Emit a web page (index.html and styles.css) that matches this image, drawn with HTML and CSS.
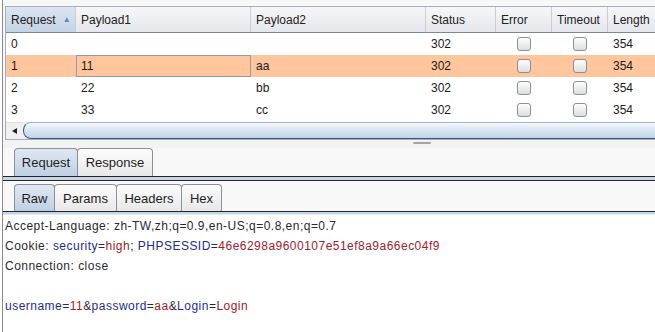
FILE: index.html
```html
<!DOCTYPE html>
<html lang="en">

<head>
    <meta charset="UTF-8">
    <title>Intruder attack results</title>
    <link rel="stylesheet" href="styles.css">
</head>

<body>
    <div class="app">
        <!--results table-->
        <div class="results">
            <div class="row head">
                <div class="cell sorted">Request <span class="sort">&#9650;</span></div>
                <div class="cell">Payload1</div>
                <div class="cell">Payload2</div>
                <div class="cell">Status</div>
                <div class="cell">Error</div>
                <div class="cell">Timeout</div>
                <div class="cell">Length</div>
            </div>
            <div class="row">
                <div class="cell">0</div>
                <div class="cell"></div>
                <div class="cell"></div>
                <div class="cell">302</div>
                <div class="cell check"><span class="box"></span></div>
                <div class="cell check"><span class="box"></span></div>
                <div class="cell">354</div>
            </div>
            <div class="row selected">
                <div class="cell">1</div>
                <div class="cell focus">11</div>
                <div class="cell">aa</div>
                <div class="cell">302</div>
                <div class="cell check"><span class="box"></span></div>
                <div class="cell check"><span class="box"></span></div>
                <div class="cell">354</div>
            </div>
            <div class="row">
                <div class="cell">2</div>
                <div class="cell">22</div>
                <div class="cell">bb</div>
                <div class="cell">302</div>
                <div class="cell check"><span class="box"></span></div>
                <div class="cell check"><span class="box"></span></div>
                <div class="cell">354</div>
            </div>
            <div class="row">
                <div class="cell">3</div>
                <div class="cell">33</div>
                <div class="cell">cc</div>
                <div class="cell">302</div>
                <div class="cell check"><span class="box"></span></div>
                <div class="cell check"><span class="box"></span></div>
                <div class="cell">354</div>
            </div>

            <!--horizontal scrollbar-->
            <div class="hscroll">
                <span class="arrow-btn"><span class="arrow"></span></span>
                <span class="thumb"></span>
            </div>
        </div>

        <!--splitter-->
        <div class="splitter"><span class="grip"></span></div>

        <!--request / response tabs-->
        <div class="tabs">
            <span class="tab active tab-req">Request</span>
            <span class="tab tab-resp">Response</span>
        </div>
        <div class="band"></div>

        <div class="tabs sub">
            <span class="tab active tab-raw">Raw</span>
            <span class="tab tab-params">Params</span>
            <span class="tab tab-headers">Headers</span>
            <span class="tab tab-hex">Hex</span>
        </div>
        <div class="band thin"></div>

        <!--raw request-->
        <div class="raw">
            <div class="line">Accept-Language: zh-TW,zh;q=0.9,en-US;q=0.8,en;q=0.7</div>
            <div class="line">Cookie: <span class="k">security</span>=<span class="v">high</span>; <span class="k">PHPSESSID</span>=<span class="v">46e6298a9600107e51ef8a9a66ec04f9</span></div>
            <div class="line">Connection: close</div>
            <div class="line"></div>
            <div class="line"><span class="k">username</span>=<span class="v">11</span>&amp;<span class="k">password</span>=<span class="v">aa</span>&amp;<span class="k">Login</span>=<span class="v">Login</span></div>
        </div>
    </div>
</body>

</html>
```

FILE: styles.css
```css
* {
    margin: 0;
    padding: 0;
    box-sizing: border-box;
}

body {
    width: 655px;
    height: 332px;
    overflow: hidden;
    background-color: #fff;
    font-family: "Liberation Sans", Arial, sans-serif;
    font-size: 12px;
    color: #1b1b1b;
}

.app {
    display: flex;
    flex-direction: column;
    margin-left: 2px;
    padding-top: 6px;
    height: 332px;
    border-left: 1px solid #8c8c8c;
    background-color: #f7f7f7;
}

/* results table */
.results {
    margin-left: 2px;
    border: 1px solid #a7aeb7;
    border-right: none;
    overflow: hidden;
    background-color: #fff;
}

.row {
    display: grid;
    grid-template-columns: 70px 175px 175px 70px 56px 56px 80px;
    height: 22px;
    width: 700px;
}

.cell {
    display: flex;
    align-items: center;
    padding-left: 5px;
    white-space: nowrap;
}

.row.head {
    height: 26px;
    border-bottom: 1px solid #7d8894;
    background: linear-gradient(#f6f7f9, #e4e7eb);
}

.row.head .cell {
    border-right: 1px solid #c9ced5;
    color: #222;
}

.row.head .cell.sorted {
    background: linear-gradient(#dbe5f0, #c3d3e4);
}

.sort {
    margin-left: 7px;
    font-size: 8px;
    color: #5f8bb8;
}

.row.selected {
    background-color: #ffc59c;
}

.cell.focus {
    border: 1px solid #8a9fb6;
    padding-left: 4px;
}

.cell.check {
    justify-content: center;
    padding-left: 0;
}

.box {
    width: 14px;
    height: 14px;
    border: 1px solid #8d8f92;
    border-radius: 3px;
    background: linear-gradient(#fdfdfd, #dcdedf);
}

/* scrollbar */
.hscroll {
    display: flex;
    height: 17px;
    margin-top: 1px;
    background-color: #f0f0f0;
}

.arrow-btn {
    display: flex;
    align-items: center;
    justify-content: center;
    width: 17px;
    border-top: 1px solid #dcdcdc;
}

.arrow {
    width: 0;
    height: 0;
    border-top: 3px solid transparent;
    border-bottom: 3px solid transparent;
    border-right: 5px solid #222;
}

.thumb {
    flex: 1;
    border: 1px solid #3a5878;
    border-top-color: #9bb3cb;
    border-right: none;
    border-radius: 8px 0 0 8px;
    background: linear-gradient(#f3f7fb, #dde8f3 40%, #c0d4e9);
}

/* splitter */
.splitter {
    height: 8px;
    padding-left: 410px;
    background-color: #f3f3f3;
}

.grip {
    display: block;
    width: 18px;
    height: 2px;
    margin-top: 2px;
    border-radius: 1px;
    background-color: #a4a4a4;
}

/* tabs */
.tabs {
    display: flex;
    flex-shrink: 0;
    height: 28px;
    padding-left: 11px;
    background-color: #f8f8f8;
}

.tabs.sub {
    height: 30px;
    padding-top: 3px;
}

.tab {
    display: flex;
    align-items: center;
    justify-content: center;
    border: 1px solid #8b8f96;
    border-bottom: none;
    border-radius: 4px 4px 0 0;
    background: linear-gradient(#fcfcfc, #e8e8e8);
    color: #1e1e1e;
    font-size: 13px;
}

.tab + .tab {
    margin-left: -1px;
}

.tab.active {
    background: linear-gradient(#dfe8f2, #bfd0e3);
}

.tab-req { width: 64px; }
.tab-resp { width: 76px; }
.tab-raw { width: 41px; }
.tab-params { width: 63px; }
.tab-headers { width: 66px; }
.tab-hex { width: 41px; }

.band {
    flex-shrink: 0;
    height: 5px;
    border-top: 1px solid #252525;
    border-bottom: 1px solid #252525;
    background-color: #c4d5e8;
}

.band.thin {
    height: 4px;
    border-bottom-color: #e3ebf3;
}

/* raw request text */
.raw {
    flex: 1;
    min-height: 0;
    overflow: hidden;
    padding: 1px 0 0 2px;
    background-color: #fff;
    letter-spacing: 0.48px;
}

.raw .line {
    height: 20px;
    line-height: 20px;
    white-space: pre;
    color: #2a2a2a;
}

.raw .k {
    color: #1d2c9a;
}

.raw .v {
    color: #a3202a;
}
```
